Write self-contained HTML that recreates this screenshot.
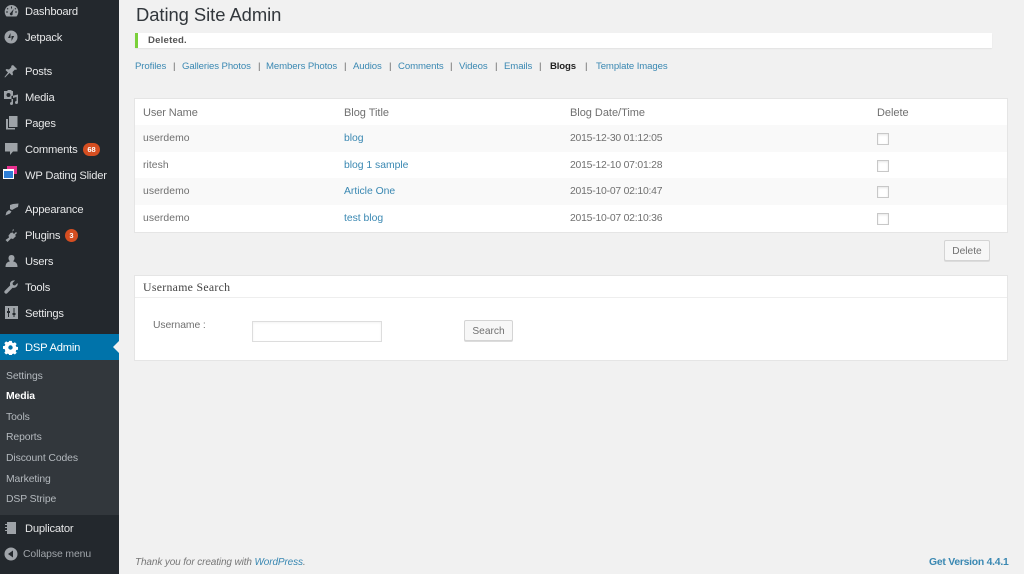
<!DOCTYPE html>
<html><head><meta charset="utf-8"><title>Dating Site Admin</title>
<style>
html,body{margin:0;padding:0;width:1024px;height:574px;overflow:hidden;background:#f1f1f1;font-family:"Liberation Sans",sans-serif;}
#w{position:absolute;left:0;top:0;width:1024px;height:574px;background:#f1f1f1;overflow:hidden;filter:blur(.3px)}
.t{position:absolute;white-space:nowrap;line-height:14px;font-size:11.2px;}
.a{position:absolute;}
.m{color:#e6e7e8;font-size:11.2px;left:25px;letter-spacing:-.2px}
.s{color:#b4b9be;font-size:10.4px;left:6px;letter-spacing:-.1px}
.l{color:#3a88b2;font-size:9.6px;top:60px;letter-spacing:-.1px}
.p{color:#666;font-size:9.6px;top:60px}
.h{color:#707070;font-size:11px;top:106px;letter-spacing:-.03px}
.c{color:#707070;font-size:10.4px;letter-spacing:.05px}
.d{color:#707070;font-size:10.4px;letter-spacing:-.22px}
.b{color:#3a88b2;font-size:10.4px;letter-spacing:-.02px}
.cb{position:absolute;left:877px;width:10px;height:10px;background:#fff;border:1px solid #c8c8c8;box-shadow:inset 0 1px 2px rgba(0,0,0,.1)}
.btn{position:absolute;box-sizing:border-box;background:#f7f7f7;border:1px solid #d4d4d4;border-radius:2px;box-shadow:0 1px 0 #dcdcdc;color:#707070;font-size:10.2px;text-align:center;}
svg{position:absolute;fill:#9ea3a8}
.bd{position:absolute;background:#d54e21;color:#fff;font-size:7.5px;font-weight:bold;text-align:center;line-height:13px;height:13px;border-radius:7px}
</style></head><body><div id="w">
<div class="a" style="left:0;top:0;width:119px;height:574px;background:#23282d"></div>
<div class="a" style="left:0;top:360px;width:119px;height:155px;background:#32373c"></div>
<div class="a" style="left:0;top:334px;width:119px;height:26px;background:#0073aa"></div>
<div class="a" style="left:113px;top:341px;width:0;height:0;border:6px solid transparent;border-right-color:#f1f1f1;border-left:0"></div>

<svg style="left:4px;top:4px" width="15" height="14" viewBox="0 0 15 14"><path fill-rule="evenodd" d="M7.500 1a6.800 6.800 0 0 0-6.800 6.800c0 2 .7 3.500 1.800 4.700h10c1.100-1.200 1.800-2.700 1.800-4.700A6.800 6.800 0 0 0 7.500 1zM7 2.500h1v2H7zM3.500 4l1 .8-.7.8-1-.8zM11.500 4l.7.8-1 .8-.7-.8zM2 7.500h2v1H2zM11 7.500h2v1h-2zM9.800 5l-1.300 4.200a1.400 1.400 0 1 1-1.800-.6z"/></svg>
<svg style="left:4px;top:30px" width="14" height="14" viewBox="0 0 14 14"><path fill-rule="evenodd" d="M7 .5a6.500 6.500 0 1 0 0 13 6.500 6.500 0 0 0 0-13zM6.500 3v5H4zM7.500 6h2.700L7.500 11z"/></svg>
<svg style="left:4px;top:64px" width="14" height="15" viewBox="0 0 14 15"><path d="M9 1l4 4-1 1-1-.5-2.500 2.500.5 2.500-1 1-2.500-2.500L1 13.500 0.500 13 4 8.500 1.500 6l1-1 2.500.5L7.500 3 7 2z"/></svg>
<svg style="left:3px;top:90px" width="16" height="15" viewBox="0 0 16 15"><path fill-rule="evenodd" d="M1 1h3l1-1h3l1 1h1v8H1zM5.500 3a2 2 0 1 0 0 4 2 2 0 0 0 0-4zM15 4.500v8a1.500 1.500 0 1 1-1.500-1.500V7L10 8v5.500a1.500 1.500 0 1 1-1.500-1.500V6z"/></svg>
<svg style="left:5px;top:116px" width="13" height="14" viewBox="0 0 13 14"><path d="M4 0h8.500v11H4zM1 3h2v9h7v1.500H1z"/></svg>
<svg style="left:5px;top:142px" width="13" height="14" viewBox="0 0 13 14"><path d="M0 1h12.500v8.500H8L5 13V9.500H0z"/></svg>
<svg style="left:2px;top:166px;fill:none" width="16" height="15" viewBox="0 0 16 15"><rect x="5" y="0" width="10" height="8" fill="#e8318f"/><rect x="1" y="3" width="11" height="10" fill="#fff"/><rect x="2" y="5" width="9" height="7" fill="#2f7fd6"/></svg>
<svg style="left:4px;top:202px" width="15" height="15" viewBox="0 0 15 15"><path d="M6 3l3-1 5.500-.5L14 5l-1.500.5L8 8l-2-1zM5 8l2.500 1.500-1.500 2-4.500 2 1-3.500z"/></svg>
<svg style="left:4px;top:228px" width="15" height="15" viewBox="0 0 15 15"><path d="M9 1l1 1-2 2 2 2 2-2 1 1-2 2 1 1-3 3-2-.5-3.500 3.500-2-2L5 9.500 4.500 7.500 7 4.500l1 .5z"/></svg>
<svg style="left:5px;top:254px" width="13" height="14" viewBox="0 0 13 14"><path d="M6.500 1c-2 0-3 1.400-3 3.200 0 1.300.7 2.400 1.500 3C2 8 .5 9.500.5 13h12c0-3.500-1.500-5-4.500-5.800.8-.6 1.500-1.700 1.500-3C9.500 2.400 8.500 1 6.500 1z"/></svg>
<svg style="left:4px;top:280px" width="14" height="14" viewBox="0 0 14 14"><path d="M13.500 3L11 5.500 9 5 8.500 3 11 .5C8.500 0 6 1.500 6 4c0 .6 0 1 .2 1.400L.8 10.800a1.700 1.700 0 0 0 2.400 2.400l5.400-5.400C11.500 8.500 14.500 6 13.500 3z"/></svg>
<svg style="left:5px;top:306px" width="13" height="13" viewBox="0 0 13 13"><path fill-rule="evenodd" d="M0 0h13v13H0zM3 2v3H2v2h1v4h1V7h1V5H4V2zM8.500 2v5h-1v2h1v2h1V9h1V7h-1V2z"/></svg>
<svg style="left:3px;top:340px;fill:#fff" width="15" height="15" viewBox="-1 -1 17 17"><path fill-rule="evenodd" d="M6 0h3l.4 2 1.300.6 1.800-1.100 2 2-1.100 1.800.6 1.300 2 .4v3l-2 .4-.6 1.300 1.100 1.800-2 2-1.800-1.100-1.300.6-.4 2H6l-.4-2-1.300-.6-1.800 1.100-2-2 1.100-1.800L1 9.400l-2-.4V6l2-.4.6-1.300L.5 2.500l2-2 1.800 1.100L5.600 1zM7.500 5a2.500 2.500 0 1 0 0 5 2.500 2.500 0 0 0 0-5z"/></svg>

<div class="t m" style="top:5px">Dashboard</div>
<div class="t m" style="top:31px">Jetpack</div>
<div class="t m" style="top:65px">Posts</div>
<div class="t m" style="top:91px">Media</div>
<div class="t m" style="top:117px">Pages</div>
<div class="t m" style="top:143px">Comments</div>
<div class="bd" style="left:83px;top:143px;width:17px">68</div>
<div class="t m" style="top:169px">WP Dating Slider</div>
<div class="t m" style="top:203px">Appearance</div>
<div class="t m" style="top:229px">Plugins</div>
<div class="bd" style="left:65px;top:229px;width:13px">3</div>
<div class="t m" style="top:255px">Users</div>
<div class="t m" style="top:281px">Tools</div>
<div class="t m" style="top:307px">Settings</div>
<div class="t m" style="top:341px;color:#fff">DSP Admin</div>
<div class="t s" style="top:370px">Settings</div>
<div class="t s" style="top:390px;color:#fff;font-weight:bold;letter-spacing:-.1px">Media</div>
<div class="t s" style="top:411px">Tools</div>
<div class="t s" style="top:431px">Reports</div>
<div class="t s" style="top:452px">Discount Codes</div>
<div class="t s" style="top:473px">Marketing</div>
<div class="t s" style="top:493px">DSP Stripe</div>
<svg style="left:5px;top:521px" width="13" height="14" viewBox="0 0 13 14"><path d="M2 1h9v12H2zM0 3h2v1H0zM0 6h2v1H0zM0 9h2v1H0z"/></svg>
<svg style="left:4px;top:547px;fill:#a0a5aa" width="14" height="14" viewBox="0 0 14 14"><path fill-rule="evenodd" d="M7 .5a6.500 6.500 0 1 0 0 13 6.500 6.500 0 0 0 0-13zM9 3.500v7L4 7z"/></svg>
<div class="t m" style="top:522px">Duplicator</div>
<div class="t" style="left:23px;top:548px;font-size:10.4px;color:#a0a5aa;letter-spacing:-.1px">Collapse menu</div>

<div class="t" style="left:136px;top:4px;font-size:18.4px;line-height:22px;color:#32373c;letter-spacing:-.05px">Dating Site Admin</div>
<div class="a" style="left:135px;top:33px;width:857px;height:15px;background:#fff;box-shadow:0 1px 1px rgba(0,0,0,.06)"></div>
<div class="a" style="left:135px;top:33px;width:3px;height:15px;background:#7ad03a"></div>
<div class="t" style="left:148px;top:34px;font-size:9.6px;font-weight:bold;color:#555;letter-spacing:.2px">Deleted.</div>

<div class="t l" style="left:135px">Profiles</div><div class="t p" style="left:173px">|</div>
<div class="t l" style="left:182px">Galleries Photos</div><div class="t p" style="left:258px">|</div>
<div class="t l" style="left:266px">Members Photos</div><div class="t p" style="left:344px">|</div>
<div class="t l" style="left:353px">Audios</div><div class="t p" style="left:389px">|</div>
<div class="t l" style="left:398px">Comments</div><div class="t p" style="left:450px">|</div>
<div class="t l" style="left:459px">Videos</div><div class="t p" style="left:495px">|</div>
<div class="t l" style="left:504px">Emails</div><div class="t p" style="left:539px">|</div>
<div class="t" style="left:550px;top:60px;font-size:9.6px;font-weight:bold;color:#222;letter-spacing:-.15px">Blogs</div><div class="t p" style="left:585px">|</div>
<div class="t l" style="left:596px">Template Images</div>

<div class="a" style="left:135px;top:99px;width:872px;height:133px;background:#fff;box-shadow:0 0 0 1px #e5e5e5"></div>
<div class="a" style="left:135px;top:125px;width:872px;height:27px;background:#f9f9f9"></div>
<div class="a" style="left:135px;top:178px;width:872px;height:27px;background:#f9f9f9"></div>
<div class="t h" style="left:143px;letter-spacing:-.1px">User Name</div>
<div class="t h" style="left:344px">Blog Title</div>
<div class="t h" style="left:570px">Blog Date/Time</div>
<div class="t h" style="left:877px">Delete</div>

<div class="t c" style="left:143px;top:132px">userdemo</div><div class="t b" style="left:344px;top:132px">blog</div><div class="t d" style="left:570px;top:132px">2015-12-30 01:12:05</div><div class="cb" style="top:133px"></div>
<div class="t c" style="left:143px;top:159px">ritesh</div><div class="t b" style="left:344px;top:159px">blog 1 sample</div><div class="t d" style="left:570px;top:159px">2015-12-10 07:01:28</div><div class="cb" style="top:160px"></div>
<div class="t c" style="left:143px;top:185px">userdemo</div><div class="t b" style="left:344px;top:185px">Article One</div><div class="t d" style="left:570px;top:185px">2015-10-07 02:10:47</div><div class="cb" style="top:186px"></div>
<div class="t c" style="left:143px;top:212px">userdemo</div><div class="t b" style="left:344px;top:212px">test blog</div><div class="t d" style="left:570px;top:212px">2015-10-07 02:10:36</div><div class="cb" style="top:213px"></div>

<div class="btn" style="left:944px;top:240px;width:46px;height:21px;line-height:21px">Delete</div>

<div class="a" style="left:135px;top:276px;width:872px;height:84px;background:#fff;box-shadow:0 0 0 1px #e5e5e5"></div>
<div class="a" style="left:135px;top:297px;width:872px;height:1px;background:#eee"></div>
<div class="t" style="left:143px;top:280px;font-family:'Liberation Serif',serif;font-size:11.8px;color:#444;letter-spacing:.3px">Username Search</div>
<div class="t c" style="left:153px;top:319px;letter-spacing:-.1px">Username :</div>
<div class="a" style="left:252px;top:321px;width:128px;height:19px;background:#fff;border:1px solid #ddd;box-shadow:inset 0 1px 2px rgba(0,0,0,.05)"></div>
<div class="btn" style="left:464px;top:320px;width:49px;height:21px;line-height:21px">Search</div>

<div class="t" style="left:135px;top:556px;font-size:10px;font-style:italic;color:#777;letter-spacing:-.12px">Thank you for creating with <span style="color:#3a88b2">WordPress</span>.</div>
<div class="t" style="left:929px;top:556px;font-size:10.4px;font-weight:bold;color:#3a88b2;letter-spacing:-.25px">Get Version 4.4.1</div>
</div></body></html>
